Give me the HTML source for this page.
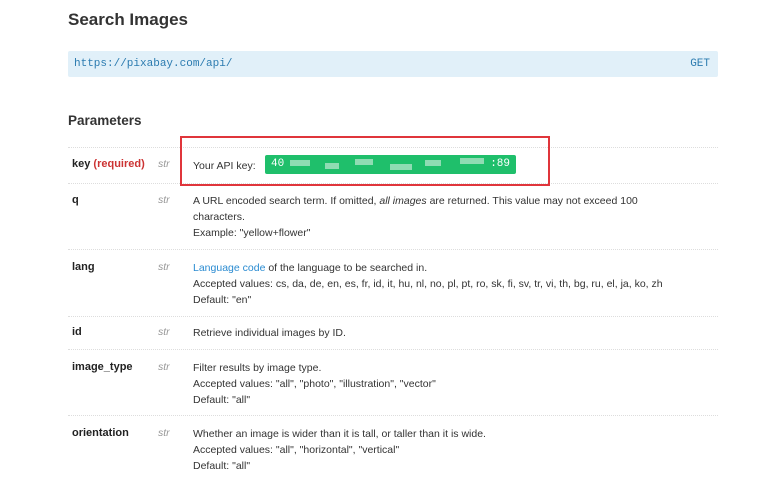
<!DOCTYPE html>
<html><head><style>
body{margin:0;width:768px;height:479px;background:#fff;font-family:"Liberation Sans",sans-serif;color:#333;position:relative;overflow:hidden}
.a{position:absolute;white-space:nowrap}
h1{position:absolute;left:68px;top:10px;margin:0;font-size:17px;font-weight:bold;color:#333}
h2{position:absolute;left:68px;top:113px;margin:0;font-size:13.5px;font-weight:bold;color:#333}
.url{position:absolute;left:68px;top:51px;width:650px;height:26px;background:#e1f0f9;border-radius:2px;font-family:"Liberation Mono",monospace;font-size:11px;color:#2b7bb0}
.sep{position:absolute;left:68px;width:650px;border-top:1px dotted #ddd}
.n{left:72px;font-size:11px;font-weight:bold;color:#222}
.t{left:158px;font-size:10.5px;font-style:italic;color:#999}
.d{left:193px;font-size:10.5px;line-height:16px;color:#333}
.px{position:absolute;background:#8fdcb3;height:6px}
</style></head><body>
<h1>Search Images</h1>
<div class="url"><span class="a" style="left:6px;top:7px">https://pixabay.com/api/</span><span class="a" style="right:8px;top:7px">GET</span></div>
<h2>Parameters</h2>
<div class="sep" style="top:147px"></div>
<div class="sep" style="top:183px"></div>
<div class="sep" style="top:249px"></div>
<div class="sep" style="top:316px"></div>
<div class="sep" style="top:349px"></div>
<div class="sep" style="top:415px"></div>
<div class="a" style="left:180px;top:136px;width:366px;height:46px;border:2px solid #e0353b"></div>
<div class="a n" style="top:158px">key <span style="color:#c33">(required)</span></div>
<div class="a t" style="top:158px">str</div>
<div class="a d" style="top:158px">Your API key:</div>
<div class="a" style="left:265px;top:155px;width:251px;height:19px;background:#1fbf6b;border-radius:2px;color:#fff;font-family:'Liberation Mono',monospace;font-size:11px;line-height:19px"><span style="padding-left:6px">40</span>
<div class="px" style="left:25px;top:5px;width:20px"></div><div class="px" style="left:60px;top:8px;width:14px"></div><div class="px" style="left:90px;top:4px;width:18px"></div><div class="px" style="left:125px;top:9px;width:22px"></div><div class="px" style="left:160px;top:5px;width:16px"></div><div class="px" style="left:195px;top:3px;width:24px"></div>
<span style="position:absolute;right:6px">:89</span></div>
<div class="a n" style="top:194px">q</div><div class="a t" style="top:194px">str</div>
<div class="a d" style="top:193px">A URL encoded search term. If omitted, <i>all images</i> are returned. This value may not exceed 100<br>characters.<br>Example: "yellow+flower"</div>
<div class="a n" style="top:261px">lang</div><div class="a t" style="top:261px">str</div>
<div class="a d" style="top:260px"><span style="color:#2a8bd1">Language code</span> of the language to be searched in.<br>Accepted values: cs, da, de, en, es, fr, id, it, hu, nl, no, pl, pt, ro, sk, fi, sv, tr, vi, th, bg, ru, el, ja, ko, zh<br>Default: "en"</div>
<div class="a n" style="top:326px">id</div><div class="a t" style="top:326px">str</div>
<div class="a d" style="top:325px">Retrieve individual images by ID.</div>
<div class="a n" style="top:361px">image_type</div><div class="a t" style="top:361px">str</div>
<div class="a d" style="top:360px">Filter results by image type.<br>Accepted values: "all", "photo", "illustration", "vector"<br>Default: "all"</div>
<div class="a n" style="top:427px">orientation</div><div class="a t" style="top:427px">str</div>
<div class="a d" style="top:426px">Whether an image is wider than it is tall, or taller than it is wide.<br>Accepted values: "all", "horizontal", "vertical"<br>Default: "all"</div>
</body></html>
